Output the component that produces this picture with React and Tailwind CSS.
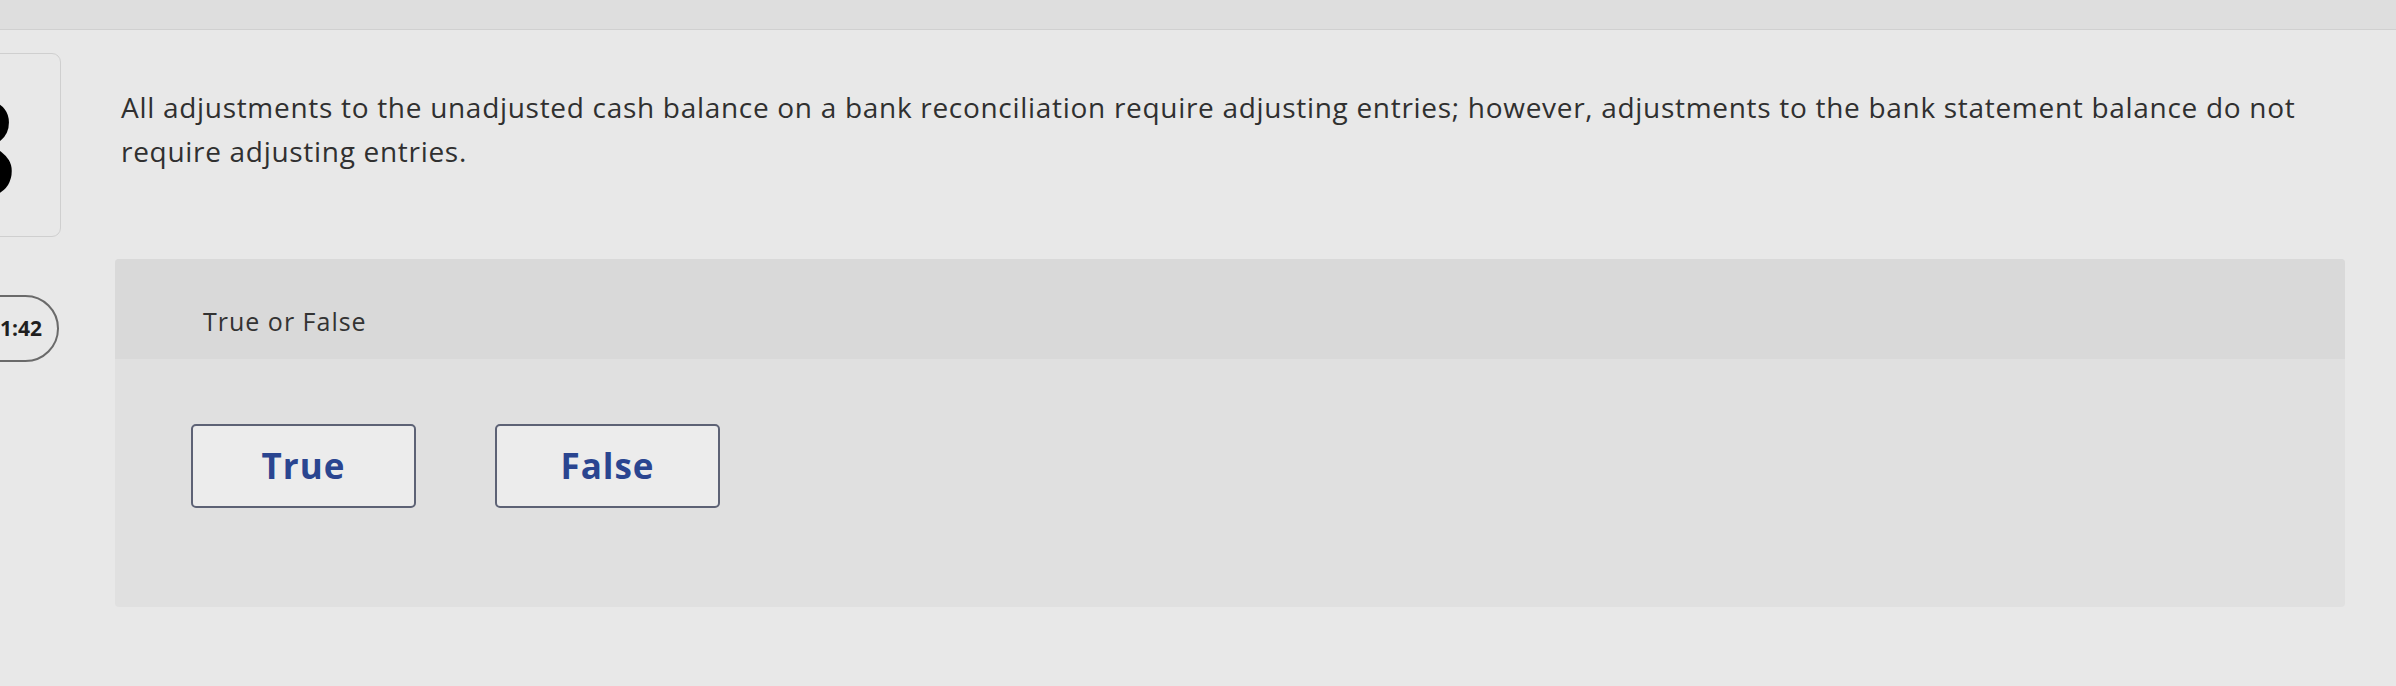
import React from 'react';

const font = { fontFamily: '"Open Sans", Lato, sans-serif' };

const AnswerButton = ({ label }) => (
  <button
    type="button"
    className="w-[225px] h-[84px] rounded-[5px] border-2 border-[#5d6275] bg-[#ececec] text-[#2a4590] text-[35px] font-bold tracking-[1px] flex items-center justify-center"
  >
    {label}
  </button>
);

export default function App() {
  return (
    <div className="w-[2396px] h-[686px] bg-[#e8e8e8] overflow-hidden text-[#333]" style={font}>
      {/* top strip */}
      <div className="h-[30px] bg-[#dedede] border-b border-[#d0d0d0]" />

      <div className="flex">
        {/* left rail: question card + timer */}
        <div className="w-[115px] shrink-0 flex flex-col">
          <div className="mt-[23px] -ml-[60px] w-[121px] h-[184px] rounded-[9px] border border-[#cfcfcf] flex items-center justify-end pr-[44px]">
            <span className="text-[134px] leading-none font-extrabold text-black">8</span>
          </div>
          <div className="mt-[58px] -ml-[40px] w-[99px] h-[67px] rounded-full border-2 border-[#6a6a6a] flex items-center justify-end pr-[15px]">
            <span className="text-[21px] font-bold text-[#1f1f1f]">11:42</span>
          </div>
        </div>

        {/* main column */}
        <div className="w-[2230px] flex flex-col">
          <p className="mt-[55px] pl-[6px] text-[28px] tracking-[0.7px] leading-[44px] text-[#303030]">
            All adjustments to the unadjusted cash balance on a bank reconciliation require adjusting entries; however, adjustments to the bank statement balance do not require adjusting entries.
          </p>

          <div className="mt-[86px] rounded-[4px] bg-[#e0e0e0] overflow-hidden">
            <div className="h-[100px] bg-[#d9d9d9] flex items-center pl-[88px] pt-[26px]">
              <span className="text-[25px] tracking-[1px] text-[#333]">True or False</span>
            </div>
            <div className="h-[248px] flex gap-[79px] pl-[76px] pt-[65px]">
              <AnswerButton label="True" />
              <AnswerButton label="False" />
            </div>
          </div>
        </div>
      </div>
    </div>
  );
}
